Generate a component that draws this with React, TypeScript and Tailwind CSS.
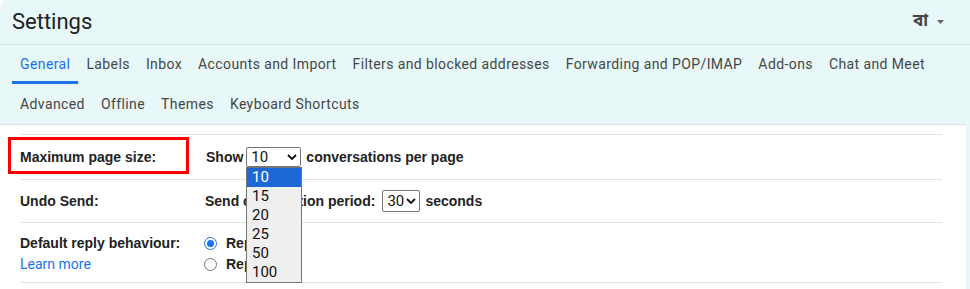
import React from "react";

const tabsTop = [
  "General",
  "Labels",
  "Inbox",
  "Accounts and Import",
  "Filters and blocked addresses",
  "Forwarding and POP/IMAP",
  "Add-ons",
  "Chat and Meet",
];
const tabsBottom = ["Advanced", "Offline", "Themes", "Keyboard Shortcuts"];
const pageSizes = ["10", "15", "20", "25", "50", "100"];

function Chevron() {
  return (
    <svg width="10" height="6" viewBox="0 0 10 6" className="shrink-0">
      <path d="M1 1l4 4 4-4" fill="none" stroke="#111" strokeWidth="1.8" />
    </svg>
  );
}

function Select({ value, className }: { value: string; className: string }) {
  return (
    <span
      className={`inline-flex items-center justify-between rounded-[2px] border border-[#767676] bg-white pl-[4px] pr-[3px] font-['Roboto',sans-serif] font-normal text-[#111] ${className}`}
    >
      <span className="text-[15px]">{value}</span>
      <Chevron />
    </span>
  );
}

function Radio({ checked }: { checked?: boolean }) {
  return checked ? (
    <span className="flex h-[13px] w-[13px] items-center justify-center rounded-full border-[1.5px] border-[#1a73e8]">
      <span className="h-[7px] w-[7px] rounded-full bg-[#1a73e8]" />
    </span>
  ) : (
    <span className="h-[13px] w-[13px] rounded-full border border-[#767676]" />
  );
}

export default function App() {
  return (
    <div className="relative h-[289px] w-[970px] overflow-hidden rounded-tl-[8px] bg-[#e8f7f8] font-['Roboto',sans-serif] text-[#202124]">
      <div className="flex h-[45px] items-center justify-between border-b border-[#d6e6e8] pl-3 pr-[26px]">
        <span className="text-[22px] leading-none">Settings</span>
        <span className="flex items-center gap-[9px] text-[#444746]">
          <span className="font-['Noto_Sans_Bengali','Noto_Sans',sans-serif] text-[17px] font-bold">বা</span>
          <svg width="7" height="4" viewBox="0 0 7 4">
            <path d="M0 0h7L3.5 4z" fill="#5f6368" />
          </svg>
        </span>
      </div>

      <div className="pl-3 text-[14px] tracking-[0.4px] text-[#444746]">
        <div className="flex h-[39px]">
          {tabsTop.map((t, i) => (
            <span
              key={t}
              className={
                i === 0
                  ? "flex items-center border-b-[3px] border-[#1a73e8] px-2 pt-[3px] text-[#1a73e8]"
                  : "flex items-center px-2"
              }
            >
              {t}
            </span>
          ))}
        </div>
        <div className="flex h-[40px]">
          {tabsBottom.map((t) => (
            <span key={t} className="flex items-center px-2">
              {t}
            </span>
          ))}
        </div>
      </div>

      <div className="mr-[4px] h-full border-t border-[#d3e3e4] bg-white pl-5 pr-[24px] pt-[9px] font-['Liberation_Sans',Arial,sans-serif] text-[14px] font-bold text-[#222]">
        <div className="flex h-[45px] items-center border-t border-[#e3e3e3]">
          <span className="w-[186px]">Maximum page size:</span>
          <span className="flex items-center">
            Show
            <Select value="10" className="ml-[3px] h-[20px] w-[55px]" />
            <span className="ml-[5px]">conversations per page</span>
          </span>
        </div>
        <div className="flex h-[43px] items-center border-t border-[#e3e3e3]">
          <span className="w-[185px]">Undo Send:</span>
          <span className="flex items-center">
            Send cancellation period:
            <Select value="30" className="ml-[7px] h-[22px] w-[38px]" />
            <span className="ml-[5px]">seconds</span>
          </span>
        </div>
        <div className="flex h-[61px] border-y border-[#e3e3e3] pt-[10px]">
          <div className="w-[184px]">
            <div className="leading-[21px]">Default reply behaviour:</div>
            <div className="font-['Roboto',sans-serif] font-normal leading-[20px] text-[#1a73e8]">Learn more</div>
          </div>
          <div>
            <div className="flex h-[21px] items-center gap-[9px]">
              <Radio checked />
              Reply
            </div>
            <div className="flex h-[20px] items-center gap-[9px]">
              <Radio />
              Reply all
            </div>
          </div>
        </div>
      </div>

      <div className="absolute left-[8px] top-[137px] h-[37px] w-[181px] border-[3px] border-[#ff0000]" />

      <div className="absolute left-[246px] top-[167px] w-[56px] border border-[#767676] bg-[#efefef] font-['Roboto',sans-serif] text-[15px] text-[#111]">
        {pageSizes.map((s, i) => (
          <div
            key={s}
            className={
              i === 0
                ? "flex h-[19px] items-center bg-[#1c68d4] pl-[5px] text-white"
                : "flex h-[19px] items-center pl-[5px]"
            }
          >
            {s}
          </div>
        ))}
      </div>
    </div>
  );
}
